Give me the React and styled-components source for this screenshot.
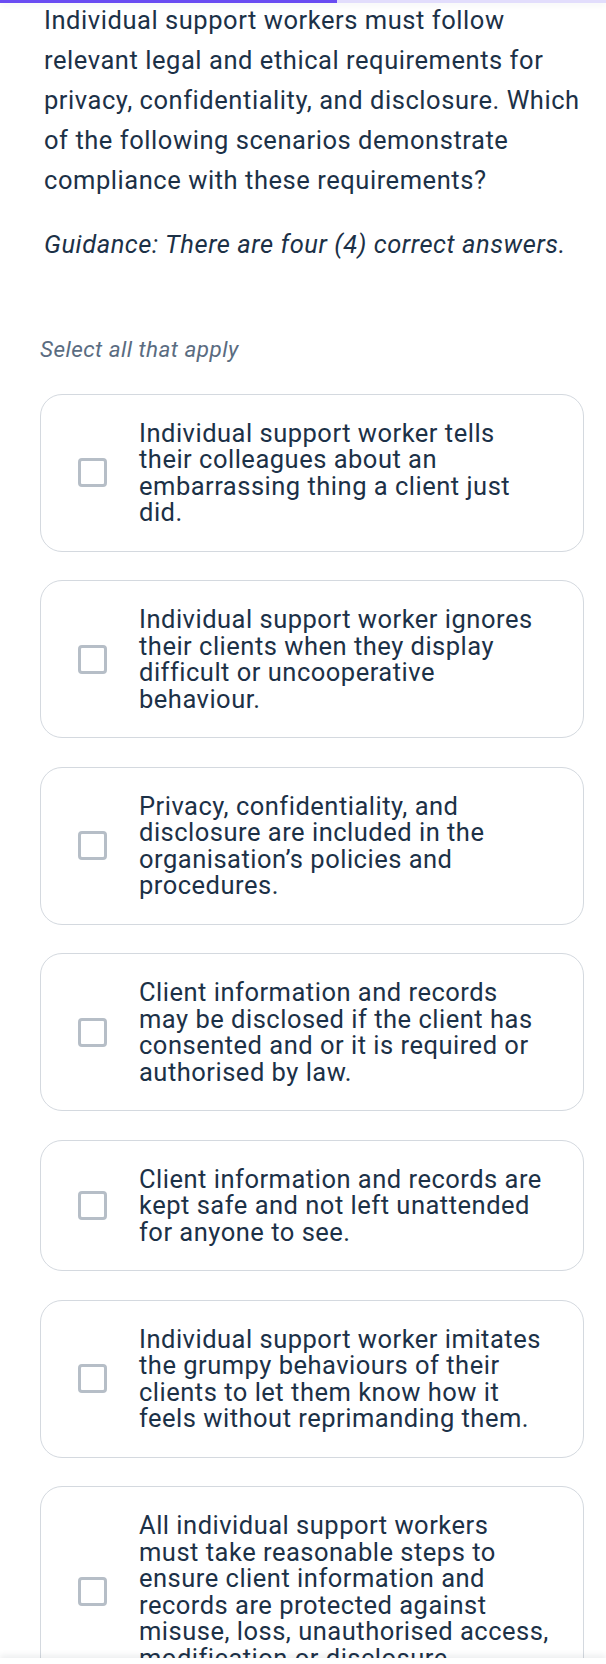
import React from "react";
import styled, { createGlobalStyle } from "styled-components";

const GlobalStyle = createGlobalStyle`
  html, body {
    margin: 0;
    padding: 0;
    background: #ffffff;
  }
  body {
    font-family: Roboto, "Noto Sans", "Liberation Sans", sans-serif;
    color: #1c3147;
  }
  * {
    box-sizing: border-box;
  }
`;

const ProgressTrack = styled.div`
  position: fixed;
  top: 0;
  left: 0;
  right: 0;
  height: 3px;
  background: #e2ddfc;
  box-shadow: 0 2px 6px rgba(30, 40, 60, 0.07);
  z-index: 5;
`;

const ProgressFill = styled.div`
  height: 100%;
  background: #6a4cf2;
`;

const Page = styled.main`
  display: flex;
  flex-direction: column;
  padding: 0 22px 40px 40px;
`;

const Question = styled.section`
  padding: 0 0 0 4px;
  margin-right: -6px;
`;

const Prompt = styled.p`
  margin: 0;
  font-size: 25.5px;
  line-height: 40px;
  letter-spacing: 0.55px;
  color: #1c3147;
`;

const Guidance = styled(Prompt)`
  margin-top: 24px;
  font-style: italic;
`;

const Hint = styled.p`
  margin: 70px 0 0;
  font-size: 22.5px;
  line-height: 30px;
  letter-spacing: 0.45px;
  font-style: italic;
  color: #5a6c81;
`;

const OptionList = styled.div`
  display: flex;
  flex-direction: column;
  gap: 28.5px;
  margin-top: 29.5px;
`;

const OptionCard = styled.label`
  display: flex;
  align-items: center;
  gap: 32px;
  padding: 25px 31.5px 25px 37px;
  border: 1px solid #d4d9df;
  border-radius: 22px;
  background: #ffffff;
  cursor: pointer;
`;

const Checkbox = styled.input.attrs({ type: "checkbox" })`
  appearance: none;
  flex: 0 0 29px;
  width: 29px;
  height: 29px;
  margin: 0;
  border: 3px solid #b6bec7;
  border-radius: 4px;
  background: #ffffff;
`;

const OptionText = styled.span`
  flex: 1;
  font-size: 25.5px;
  line-height: 26.5px;
  letter-spacing: 0.5px;
  color: #1c3147;
`;

const BottomBar = styled.div`
  position: fixed;
  left: 0;
  right: 0;
  bottom: 0;
  height: 6px;
  background: #ffffff;
  box-shadow: 0 -2px 6px rgba(30, 40, 60, 0.1);
`;

const options = [
  "Individual support worker tells their colleagues about an embarrassing thing a client just did.",
  "Individual support worker ignores their clients when they display difficult or uncooperative behaviour.",
  "Privacy, confidentiality, and disclosure are included in the organisation’s policies and procedures.",
  "Client information and records may be disclosed if the client has consented and or it is required or authorised by law.",
  "Client information and records are kept safe and not left unattended for anyone to see.",
  "Individual support worker imitates the grumpy behaviours of their clients to let them know how it feels without reprimanding them.",
  "All individual support workers must take reasonable steps to ensure client information and records are protected against misuse, loss, unauthorised access, modification or disclosure.",
];

export default function App() {
  const progress = 55.6;
  return (
    <>
      <GlobalStyle />
      <ProgressTrack>
        <ProgressFill style={{ width: `${progress}%` }} />
      </ProgressTrack>
      <Page>
        <Question>
          <Prompt>
            Individual support workers must follow relevant legal and ethical
            requirements for privacy, confidentiality, and disclosure. Which of
            the following scenarios demonstrate compliance with these
            requirements?
          </Prompt>
          <Guidance>Guidance: There are four (4) correct answers.</Guidance>
        </Question>
        <Hint>Select all that apply</Hint>
        <OptionList>
          {options.map((text, index) => (
            <OptionCard key={index}>
              <Checkbox />
              <OptionText>{text}</OptionText>
            </OptionCard>
          ))}
        </OptionList>
      </Page>
      <BottomBar />
    </>
  );
}
